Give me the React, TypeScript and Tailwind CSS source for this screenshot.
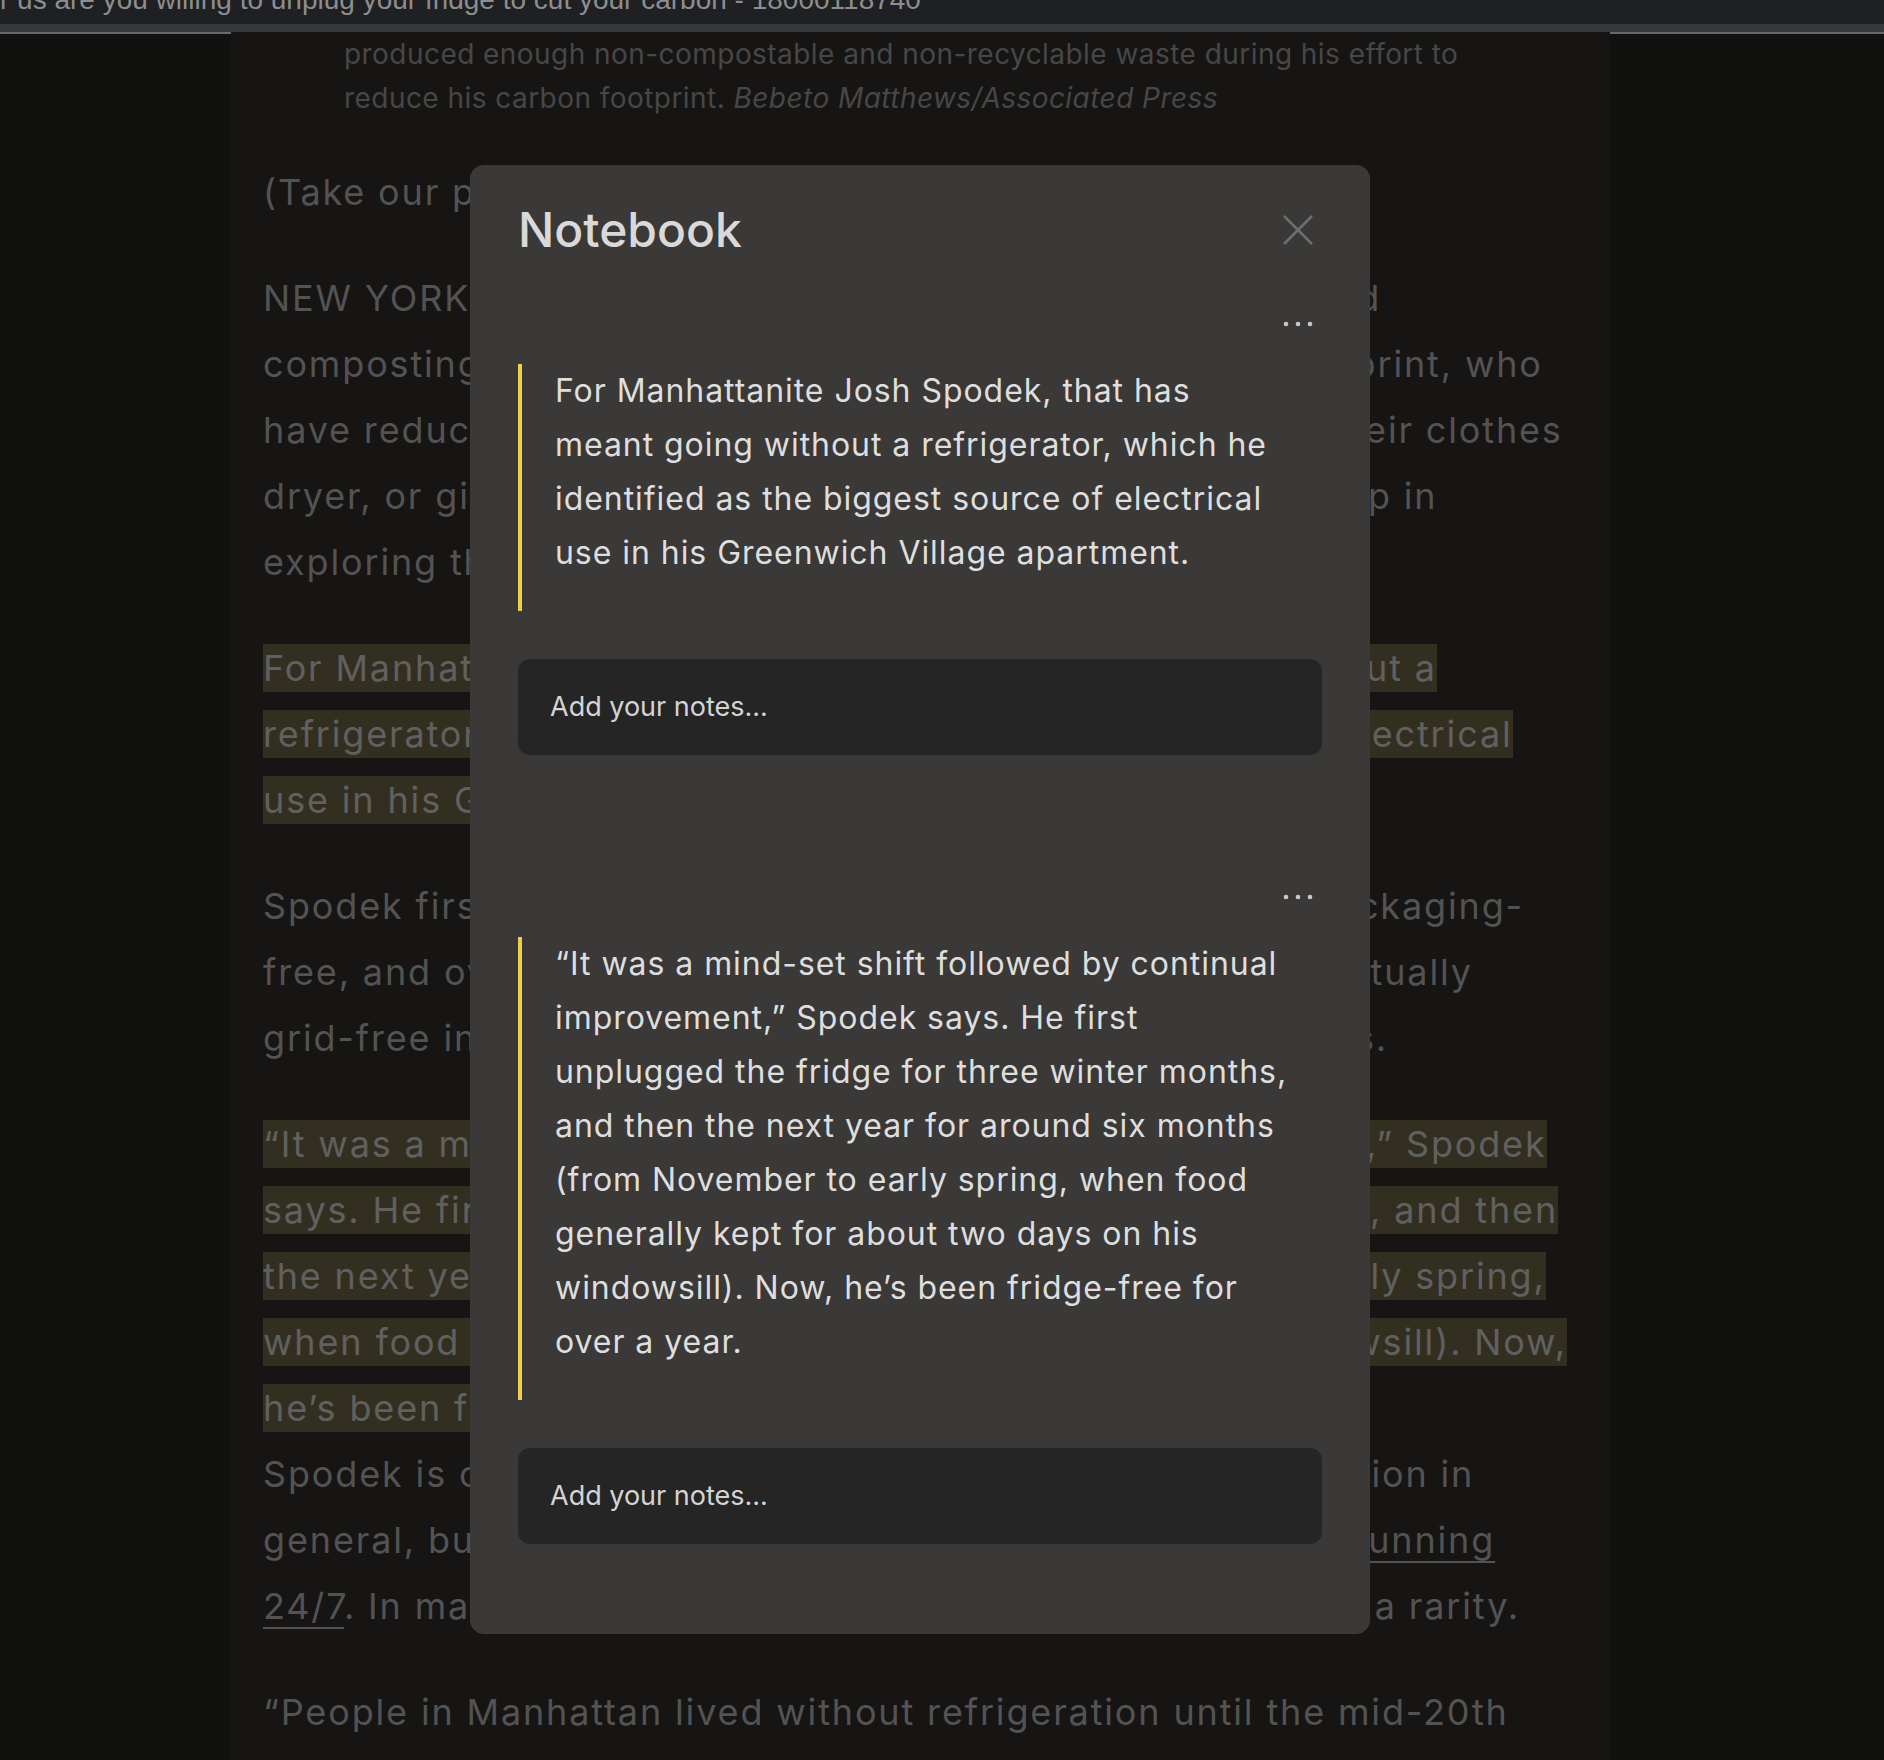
import type { ReactNode } from 'react';

function Mark({ children }: { children: ReactNode }) {
  return (
    <span className="bg-[#332f20] py-[2px] text-[#606060] [box-decoration-break:clone] [-webkit-box-decoration-break:clone]">
      {children}
    </span>
  );
}

function DotsButton() {
  return (
    <div className="flex justify-end">
      <button className="flex h-[48px] w-[48px] items-center justify-center">
        <svg width="32" height="8" viewBox="0 0 32 8">
          <circle cx="4" cy="4" r="2.3" fill="#c9c9c9" />
          <circle cx="16" cy="4" r="2.3" fill="#c9c9c9" />
          <circle cx="28" cy="4" r="2.3" fill="#c9c9c9" />
        </svg>
      </button>
    </div>
  );
}

function NoteCard({ lines }: { lines: string[] }) {
  return (
    <section>
      <DotsButton />
      <blockquote className="mt-[16px] border-l-[4px] border-[#f2cd4a] pb-[31px] pl-[33px]">
        <p className="text-[32px] leading-[54px] tracking-[0.95px] text-[#dedede]">
          {lines.map((l, i) => (
            <span key={i} className="block">
              {l}
            </span>
          ))}
        </p>
      </blockquote>
      <div className="mt-[48px] flex h-[96px] items-center rounded-[12px] bg-[#252525] px-[32px] text-[27px] text-[#d4d4d4]">
        Add your notes...
      </div>
    </section>
  );
}

const underline = 'underline decoration-[2px] underline-offset-[8px]';

export default function App() {
  return (
    <div className="relative h-[1760px] w-[1884px] overflow-hidden bg-[#111110] font-['Inter','Noto_Sans',sans-serif]">
      {/* browser chrome remnant */}
      <div className="h-[24px] overflow-hidden bg-[#1f2023]">
        <div className="-mt-[14px] whitespace-nowrap font-['Liberation_Sans',sans-serif] text-[28px] leading-[28px] text-[#8e8e8e]">
          r us are you willing to unplug your fridge to cut your carbon - 18000118740
        </div>
      </div>
      <div className="h-[8px] bg-[#37383c]" />
      <div className="h-[2px] bg-[#68686a]" />

      {/* article column */}
      <main className="ml-[231px] h-full w-[1379px] bg-[#161514]">
        <p className="-mt-[2px] pl-[113px] text-[28px] leading-[44px] tracking-[0.45px] text-[#474747]">
          produced enough non-compostable and non-recyclable waste during his effort to
          <br />
          reduce his carbon footprint. <em>Bebeto Matthews/Associated Press</em>
        </p>

        <div className="mt-[39px] flex flex-col gap-[40px] whitespace-nowrap pl-[32px] text-[36px] leading-[66px] tracking-[1.85px] text-[#535353]">
          <p>(Take our poll on what you’d give up.)</p>
          <p>
            NEW YORK (AP) — There are people who gave up meat and
            <br />
            composting food waste to help cut down their carbon footprint, who
            <br />
            have reduced their flying, gone vegan, or stopped using their clothes
            <br />
            dryer, or given up their autos. Some others have stepped up in
            <br />
            exploring the limits of green living.
          </p>
          <p>
            <Mark>
              For Manhattanite Josh Spodek, that has meant going without a
              <br />
              refrigerator, which he identified as the biggest source of electrical
              <br />
              use in his Greenwich Village apartment.
            </Mark>
          </p>
          <p>
            Spodek first tried to make his life more sustainable and packaging-
            <br />
            free, and over the course of several years, he’s become virtually
            <br />
            grid-free in his apartment save for a few lights and devices.
          </p>
          <p>
            <Mark>
              “It was a mind-set shift followed by continual improvement,” Spodek
              <br />
              says. He first unplugged the fridge for three winter months, and then
              <br />
              the next year for around six months (from November to early spring,
              <br />
              when food generally kept for about two days on his windowsill). Now,
              <br />
              he’s been fridge-free for over a year.
            </Mark>
            <br />
            Spodek is conscious about cutting his electricity consumption in
            <br />
            general, but the fridge is a big culprit because it’s always{' '}
            <span className={underline}>running</span>
            <br />
            <span className={underline}>24/7</span>. In many households, going without a fridge would be a rarity.
          </p>
          <p>“People in Manhattan lived without refrigeration until the mid-20th</p>
        </div>
      </main>

      {/* notebook modal */}
      <div className="absolute left-[470px] top-[165px] h-[1469px] w-[900px] rounded-[14px] bg-[#3a3937] px-[48px] pt-[41px]">
        <header className="flex h-[48px] items-center justify-between">
          <h2 className="text-[48px] font-medium leading-[48px] text-[#d9d9d9]">Notebook</h2>
          <button className="flex h-[48px] w-[48px] items-center justify-center">
            <svg width="30" height="30" viewBox="0 0 30 30" fill="none" stroke="#6e6e6e" strokeWidth="2.5">
              <path d="M1 1 L29 29 M29 1 L1 29" />
            </svg>
          </button>
        </header>

        <div className="mt-[46px]">
          <NoteCard
            lines={[
              'For Manhattanite Josh Spodek, that has',
              'meant going without a refrigerator, which he',
              'identified as the biggest source of electrical',
              'use in his Greenwich Village apartment.',
            ]}
          />
        </div>
        <div className="mt-[118px]">
          <NoteCard
            lines={[
              '“It was a mind-set shift followed by continual',
              'improvement,” Spodek says. He first',
              'unplugged the fridge for three winter months,',
              'and then the next year for around six months',
              '(from November to early spring, when food',
              'generally kept for about two days on his',
              'windowsill). Now, he’s been fridge-free for',
              'over a year.',
            ]}
          />
        </div>
      </div>
    </div>
  );
}
